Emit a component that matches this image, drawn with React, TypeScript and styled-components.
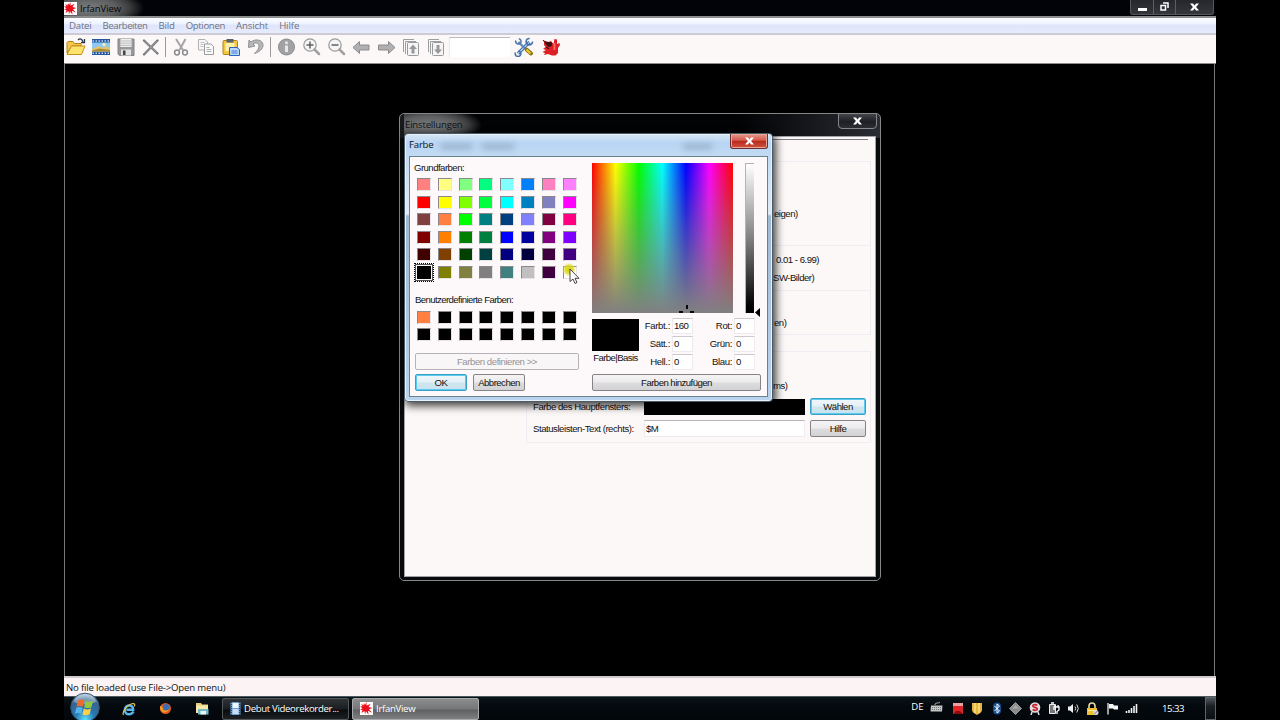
import React from 'react';
import styled, { createGlobalStyle, css } from 'styled-components';

const segoe = '"Open Sans", "Noto Sans", sans-serif';
const sansSerif = '"Liberation Sans", Arial, sans-serif';

const GlobalStyle = createGlobalStyle`
  * { box-sizing: border-box; }
  html, body { margin: 0; background: #000; overflow: hidden; }
  svg { display: block; flex: none; }
`;

const Screen = styled.div`
  width: 1280px;
  height: 720px;
  background: #000;
  display: flex;
  justify-content: center;
  overflow: hidden;
`;

const Desktop = styled.div`
  position: relative;
  width: 1152px;
  height: 720px;
  display: flex;
  flex-direction: column;
  font-family: ${segoe};
  color: #111;
`;

const Text = styled.span<{ $size?: number; $spacing?: number }>`
  font-size: ${p => p.$size ?? 9.6}px;
  letter-spacing: ${p => (p.$spacing === undefined ? 'inherit' : `${p.$spacing}px`)};
  line-height: 12px;
  white-space: nowrap;
`;

/* Main window */

const TitleBar = styled.header`
  height: 16px;
  display: flex;
  align-items: flex-start;
  background: radial-gradient(ellipse 56px 20px at 24px 8px, #7b7d7e 0%, #5c5e5f 50%, #3a3c3d 75%, transparent 100%), #020308;
`;

const TitleText = styled.div`
  flex: 1;
  display: flex;
  gap: 3px;
  color: #050505;
  padding-top: 2px;
  & > span { margin-top: 1px; }
`;

const CaptionButtons = styled.div`
  display: flex;
  height: 15px;
  margin-right: 2px;
  border: 1px solid #53565b;
  border-top: 0;
  border-radius: 0 0 3px 3px;
  background: linear-gradient(#25272c, #34363c);
`;

const CaptionButton = styled.div<{ $w: number }>`
  width: ${p => p.$w}px;
  display: flex;
  align-items: center;
  justify-content: center;
  padding-bottom: 1px;
  & + & { border-left: 1px solid #5b5e64; }
`;

const MenuBar = styled.nav`
  height: 17px;
  border-top: 2px solid #8b8d8c;
  display: flex;
  align-items: center;
  gap: 11px;
  padding: 0 0 0 5px;
  color: #6d7180;
  background: linear-gradient(#fafcff 0, #f0f4ff 35%, #dfe5fb 50%, #e6ebfd 100%);
`;

const Toolbar = styled.div`
  height: 31px;
  display: flex;
  align-items: center;
  border-top: 2px solid #cccbd6;
  border-bottom: 1px solid #8d8b8d;
  padding-bottom: 4px;
  background: #fcf8f8;
`;

const ToolSlot = styled.div<{ $w?: number }>`
  width: ${p => p.$w ?? 25}px;
  display: flex;
  justify-content: center;
`;

const ToolSeparator = styled.i`
  width: 1px;
  height: 20px;
  background: #9c9a9e;
  margin: 0 2px 0 2px;
`;

const ToolInput = styled.div`
  width: 61px;
  height: 20px;
  margin-left: 1px;
  border-top: 1px solid #bdbabd;
  border-left: 1px solid #ece8ea;
  background: #fff;
`;

const Canvas = styled.main`
  flex: 1;
  margin-right: 1px;
  border-left: 1px solid #777;
  border-right: 1px solid #777;
  background: #000;
`;

const StatusBar = styled.footer`
  height: 20px;
  display: flex;
  align-items: center;
  padding: 2px 0 0 2px;
  border-top: 2px solid #cfcacb;
  background: #fcf4f4;
  letter-spacing: -0.17px;
`;

/* Task bar */

const TaskBar = styled.div`
  height: 24px;
  display: flex;
  align-items: center;
  border-top: 1px solid #4b5960;
  background: linear-gradient(#0c1418, #04090e 40%, #03070c);
  color: #fff;
`;

const StartOrb = styled.div`
  width: 42px;
  height: 30px;
  margin-top: -4px;
  padding-left: 6px;
  z-index: 1;
`;

const LaunchItem = styled.div`
  width: 36.5px;
  display: flex;
  justify-content: center;
  padding-left: 9px;
`;

const TaskButtons = styled.div`
  display: flex;
  gap: 3px;
  margin-left: 6.5px;
`;

const TaskButton = styled.div<{ $active?: boolean }>`
  width: 127px;
  height: 22px;
  padding-left: 7px;
  display: flex;
  align-items: center;
  gap: 3px;
  border: 1px solid ${p => (p.$active ? '#a8a9aa' : '#55585b')};
  border-radius: 2px;
  background: ${p =>
    p.$active
      ? 'linear-gradient(#8b8c8d, #767778 50%, #5f6061 55%, #7f8081)'
      : 'linear-gradient(#303437, #191d20 50%, #0a0d10 55%, #1d2022)'};
`;

const Tray = styled.div`
  margin-left: auto;
  height: 23px;
  display: flex;
  align-items: center;
`;

const TrayItem = styled.div<{ $w?: number; $raise?: number }>`
  width: ${p => p.$w ?? 19.25}px;
  padding-bottom: ${p => p.$raise ?? 0}px;
  display: flex;
  justify-content: center;
`;

const ShowDesktop = styled.div`
  width: 11px;
  height: 23px;
  border: 1px solid #5e6468;
  background: linear-gradient(#50565b, #1a1e22 40%, #0c0f12);
`;

/* Dialog windows floating on the desktop */

const SettingsWindow = styled.section`
  position: absolute;
  left: 335px;
  top: 113px;
  width: 482px;
  height: 468px;
  padding: 0 4px 3px;
  border: 1px solid #858787;
  border-radius: 5px;
  background: linear-gradient(90deg, #191a1b 0, #020305 50px, #020305 340px, #2a2c33 100%);
  background-size: 100% 24px;
  background-repeat: no-repeat;
  background-color: #08090a;
  display: flex;
  flex-direction: column;
`;

const SettingsTitle = styled.div`
  height: 22px;
  display: flex;
  justify-content: space-between;
  background: radial-gradient(ellipse 54px 18px at 24px 11px, #77797a 0%, #5c5e5f 50%, #3a3c3d 75%, transparent 100%);
  padding: 5px 0 0 1px;
  letter-spacing: -0.2px;
`;

const SettingsClose = styled.div`
  width: 39px;
  height: 16px;
  margin: -6px -1px 0 0;
  border: 1px solid #85878a;
  border-radius: 0 0 4px 4px;
  display: flex;
  align-items: center;
  justify-content: center;
  background: linear-gradient(#43454b, #1d1f24 55%, #2c2e34);
`;

const SettingsBody = styled.div`
  flex: 1;
  border: 1px solid #a0a1a4;
  background: #fdf8f8;
  display: flex;
  flex-direction: column;
  font-family: ${sansSerif};
  letter-spacing: -0.5px;
`;

const TabEdge = styled.div`
  height: 1px;
  margin: 2px 7px 21px 360px;
  background: #817b84;
`;

const Group = styled.div<{ $h: number; $gap?: number }>`
  height: ${p => p.$h}px;
  margin: 0 4px ${p => p.$gap ?? 0}px 121px;
  border: 1px solid #efecf3;
  border-bottom-width: ${p => (p.$gap === undefined ? 0 : 1)}px;
  display: flex;
  flex-direction: column;
`;

const GroupLine = styled.div<{ $top: number; $left: number }>`
  height: 12px;
  margin-top: ${p => p.$top}px;
  padding-left: ${p => p.$left}px;
  display: flex;
`;

const FieldRow = styled.div<{ $top: number }>`
  height: 17px;
  margin: ${p => p.$top}px 0 0 6px;
  display: grid;
  grid-template-columns: 111px 161px 56px;
  align-items: center;
  & > :nth-child(3) { margin-left: 5px; }
`;

const ColorPreview = styled.div`
  height: 16px;
  background: #000;
`;

const TextField = styled.div`
  height: 17px;
  padding: 0 0 0 1px;
  border: 1px solid #efebef;
  border-top-color: #b9b5b9;
  background: #fff;
  display: flex;
  align-items: center;
`;

const PushButton = styled.div<{ $w: number; $primary?: boolean; $disabled?: boolean }>`
  width: ${p => p.$w}px;
  height: 17px;
  display: flex;
  align-items: center;
  justify-content: center;
  border: 1px solid #858387;
  border-radius: 2px;
  background: linear-gradient(#f5f3f4, #ecebec 48%, #dddcde 52%, #d2d1d3);
  ${p => p.$primary && css`
    border-color: #3d9fc4;
    box-shadow: inset 0 0 0 1px #58cbf0;
    background: linear-gradient(#f0f7fa, #e4f1f6 48%, #cfe6f0 52%, #c8e2ee);
  `}
  ${p => p.$disabled && css`
    border-color: #b6b3b6;
    background: #f8f6f7;
    color: #969396;
  `}
`;

const ColorWindow = styled.section`
  position: absolute;
  left: 340px;
  top: 133px;
  width: 369px;
  height: 269px;
  padding: 0 4px 4px;
  border: 1px solid #4c5a66;
  border-radius: 4px;
  background: linear-gradient(#d8e7f5 0, #b8d5f3 9px, #c3dbf4 23px, #d5e5f5 60px, #dfebf5 80px, #9fb9d2 82px, #bad4ee 100%);
  box-shadow: inset 0 0 0 1px #e6f1fa, 2px 3px 9px 1px rgba(0, 0, 0, 0.75);
  display: flex;
  flex-direction: column;
`;

const ColorTitle = styled.div`
  position: relative;
  height: 22px;
  flex: none;
  display: flex;
  justify-content: space-between;
  padding: 5px 0 0 0;
  letter-spacing: -0.2px;
`;

const GlassGhost = styled.i<{ $x: number; $w: number }>`
  position: absolute;
  left: ${p => p.$x}px;
  top: 10px;
  width: ${p => p.$w}px;
  height: 5px;
  background: #93abc8;
  filter: blur(3px);
`;

const RedClose = styled.div`
  width: 38px;
  height: 15px;
  margin-top: -5px;
  border: 1px solid #672f32;
  border-top: 0;
  border-radius: 0 0 3px 3px;
  box-shadow: inset 0 0 0 1px #e8a59a;
  background: linear-gradient(#e79b8f, #d6594b 45%, #b92c1d 52%, #d0533e);
  display: flex;
  align-items: center;
  justify-content: center;
`;

const ColorBody = styled.div`
  flex: 1;
  border: 1px solid #69808f;
  background: #fdf9fa;
  display: flex;
  font-family: ${sansSerif};
  letter-spacing: -0.54px;
`;

const PaletteColumn = styled.div`
  width: 182px;
  padding: 5px 0 0 4px;
  display: flex;
  flex-direction: column;
`;

const SwatchGrid = styled.div<{ $top: number }>`
  margin: ${p => p.$top}px 0 0 3px;
  display: grid;
  grid-template-columns: repeat(8, 14px);
  grid-auto-rows: 13px;
  column-gap: 6.8px;
  row-gap: 4.5px;
`;

const Swatch = styled.div<{ $color: string; $selected?: boolean }>`
  background: ${p => p.$color};
  border: 1px solid;
  border-color: #8b888c #e8e4e6 #e8e4e6 #8b888c;
  ${p => p.$selected && css`
    border-color: #000;
    box-shadow: 0 0 0 1px #fdf9fa, 0 0 0 2px #555;
    outline: 1px dotted #000;
    outline-offset: 2px;
  `}
`;

const ButtonRow = styled.div<{ $top: number }>`
  display: flex;
  gap: 6px;
  margin: ${p => p.$top}px 0 0 1px;
`;

const MixerColumn = styled.div`
  flex: 1;
  padding-top: 6px;
  display: flex;
  flex-direction: column;
`;

const PickerRow = styled.div`
  height: 150px;
  display: flex;
`;

const Spectrum = styled.div`
  width: 141px;
  height: 150px;
  display: flex;
  justify-content: flex-end;
  align-items: flex-end;
  padding-right: 39px;
  background: linear-gradient(rgba(128, 128, 128, 0), #808080),
    linear-gradient(90deg, #f00, #ff0 16.67%, #0f0 33.33%, #0ff 50%, #00f 66.67%, #f0f 83.33%, #f00);
`;

const LuminanceBar = styled.div`
  width: 9px;
  height: 150px;
  margin-left: 12px;
  border: 1px solid #b5b2b5;
  border-bottom: 0;
  border-right: 0;
  background: linear-gradient(#fff, #808080 50%, #000 96%);
`;

const LuminanceArrow = styled.div`
  align-self: flex-end;
  margin: 0 0 -4px 1px;
`;

const ValuesRow = styled.div`
  display: flex;
  margin-top: 6px;
  height: 55px;
`;

const PreviewBox = styled.div`
  width: 47px;
  display: flex;
  flex-direction: column;
  align-items: center;
  gap: 2px;
`;

const PreviewColor = styled.div`
  width: 47px;
  height: 32px;
  margin-bottom: -1px;
  background: #000;
`;

const ValueGrid = styled.div`
  display: grid;
  grid-template-columns: 31px 21px 37px 21px;
  grid-auto-rows: 16px;
  column-gap: 2px;
  row-gap: 2px;
  margin-top: -1px;
`;

const ValueLabel = styled.div`
  display: flex;
  align-items: center;
  justify-content: flex-end;
  letter-spacing: -0.35px;
`;

const ValueInput = styled.div`
  border: 1px solid #eeeaee;
  border-top-color: #cdc9cd;
  background: #fff;
  padding-left: 1px;
  display: flex;
  align-items: center;
`;

const Pointer = styled.div`
  position: absolute;
  left: 498px;
  top: 262px;
`;

const basicColors = [
  '#ff8080', '#ffff80', '#80ff80', '#00ff80', '#80ffff', '#0080ff', '#ff80c0', '#ff80ff',
  '#ff0000', '#ffff00', '#80ff00', '#00ff40', '#00ffff', '#0080c0', '#8080c0', '#ff00ff',
  '#804040', '#ff8040', '#00ff00', '#008080', '#004080', '#8080ff', '#800040', '#ff0080',
  '#800000', '#ff8000', '#008000', '#008040', '#0000ff', '#0000a0', '#800080', '#8000ff',
  '#400000', '#804000', '#004000', '#004040', '#000080', '#000040', '#400040', '#400080',
  '#000000', '#808000', '#808040', '#808080', '#408080', '#c0c0c0', '#400040', '#ffffff',
];
const customColors = ['#ff8040', ...Array(15).fill('#000000')];

const menuItems: [string, number][] = [
  ['Datei', -0.2], ['Bearbeiten', -0.42], ['Bild', -0.2], ['Optionen', -0.35], ['Ansicht', -0.1], ['Hilfe', -0.1],
];

/* Icons */

const Icon = ({ w = 20, h = 20, children }: { w?: number; h?: number; children: React.ReactNode }) => (
  <svg width={w} height={h} viewBox={`0 0 ${w} ${h}`} fill="none">{children}</svg>
);

const CatIcon = () => (
  <Icon w={13} h={13}>
    <rect width="13" height="13" fill="#fff" />
    <path d="M1 1.500l2.500 2L4 1l1 2 1.500-3v3.500l4-1.500-2 3L12.500 6 9 7.200l3 3.600-4-2 .5 4-2.500-3.500L5 12.500 4.500 9 1.500 11l1-3L0 7.500l2.500-1.300L0 4.500l2.500-.3z" fill="#e8101c" />
  </Icon>
);

const CloseGlyph = () => (
  <Icon w={9} h={8}>
    <path d="M0 .5h3L4.500 2.400 6 .5h3L6.100 4 9 7.500H6L4.500 5.600 3 7.500H0L2.900 4z" fill="#fff" />
  </Icon>
);

const OpenIcon = () => (
  <Icon>
    <path d="M1 16V5.500l1-1h5l1.500 2H15V9H6z" fill="#f3c54d" stroke="#b68416" />
    <path d="M1 17.500L5.500 9H19l-3.500 8.500z" fill="#ffe36d" stroke="#c2911d" />
    <path d="M12 3c2-2 4-1 5 1.500M18.500 2v3.500H15" stroke="#27384a" strokeWidth="1.300" />
  </Icon>
);
const FilmIcon = () => (
  <Icon>
    <rect x="1" y="2" width="18" height="16" fill="#25569c" />
    <path d="M1.500 4h17M1.500 16.200h17" stroke="#b9d6f4" strokeWidth="1.400" strokeDasharray="1.500 1.500" />
    <rect x="1" y="5.500" width="18" height="9" fill="#8ec9f5" />
    <path d="M1 12l6.500-3 4 2 3-2 4.500 2v3.500H1z" fill="#e2c469" />
    <path d="M1 13.500l7.500-2 10.500 1.500v1.500H1z" fill="#ab8938" />
    <circle cx="13" cy="7.500" r="1.500" fill="#fff3b1" />
  </Icon>
);
const SaveIcon = () => (
  <Icon>
    <path d="M2 2h16v16.500H3.500L2 17z" fill="#98989a" stroke="#838385" />
    <rect x="4.500" y="2" width="11" height="8" fill="#f1f0f0" />
    <path d="M5 4h10M5 6.200h10M5 8.400h10" stroke="#bbb" />
    <rect x="5" y="12.500" width="10" height="6" fill="#e2e2e2" />
    <rect x="7" y="13.500" width="2.500" height="4.500" fill="#444" />
  </Icon>
);
const DeleteIcon = () => (
  <Icon>
    <path d="M3 3.500l13.500 13M16.500 3.500L3 17.500" stroke="#77777a" strokeWidth="2.400" strokeLinecap="round" />
    <path d="M3.500 4l12.500 12M16 4L3.500 17" stroke="#a8a8aa" strokeWidth=".8" />
  </Icon>
);
const CutIcon = () => (
  <Icon>
    <path d="M5 2l7 11M14.500 2L8.500 13" stroke="#a5a5a8" strokeWidth="2" />
    <circle cx="6" cy="15.500" r="2.400" stroke="#8b8b8e" strokeWidth="1.500" />
    <circle cx="14" cy="15.500" r="2.400" stroke="#8b8b8e" strokeWidth="1.500" />
  </Icon>
);
const CopyIcon = () => (
  <Icon>
    <path d="M2.500 2.500H9l2.500 2.500v8h-9z" fill="#f7f7f7" stroke="#b1b0b3" />
    <path d="M4.500 5.500h4M4.500 7.500h3M4.500 9.500h3" stroke="#c0bfc2" />
    <path d="M8.500 7H15l2.500 2.500v8h-9z" fill="#fafafa" stroke="#9b9b9e" />
    <path d="M10.500 10.500h3M10.500 12.500h5M10.500 14.500h5" stroke="#b0afb2" />
  </Icon>
);
const PasteIcon = () => (
  <Icon>
    <rect x="2" y="3.500" width="14.500" height="14" rx="1" fill="#f4c940" stroke="#b28419" />
    <path d="M5.500 2h7v3.500h-7z" fill="#59616d" />
    <rect x="4.500" y="6" width="9" height="8" fill="#fff0ac" />
    <path d="M8.500 10.500H16l2.500 2v6h-10z" fill="#b9d5f9" stroke="#2c64b8" />
    <path d="M10.500 14h6M10.500 16h6" stroke="#477fce" />
  </Icon>
);
const UndoIcon = () => (
  <Icon>
    <path d="M3 3l-.5 7.500L9 9 7 7c3-2 6-1 6 2 0 2.500-1.500 4.500-4.500 7.500C13 15 17.500 12 17 7.500 16.500 2.500 9 1.500 5 5z" fill="#b7b7ba" stroke="#919195" />
  </Icon>
);
const InfoIcon = () => (
  <Icon>
    <circle cx="10.500" cy="10" r="8" fill="#a2a2a4" stroke="#8b8b8e" />
    <circle cx="10.500" cy="5.700" r="1.500" fill="#e8e8e8" />
    <path d="M9 8.500h3v6.500H9z" fill="#e8e8e8" />
  </Icon>
);
const ZoomIcon = ({ plus }: { plus?: boolean }) => (
  <Icon>
    <circle cx="9" cy="8" r="6.200" fill="#f6f5f6" stroke="#99999c" strokeWidth="1.200" />
    <path d={plus ? 'M5.500 8h7M9 4.500v7' : 'M5.500 8h7'} stroke="#606064" strokeWidth="1.500" />
    <path d="M13.500 12.500l4.500 4.500" stroke="#a1a1a4" strokeWidth="2.500" strokeLinecap="round" />
  </Icon>
);
const ArrowIcon = ({ right }: { right?: boolean }) => (
  <Icon>
    <path d={right ? 'M19 10.500L12.500 4.500v3.500h-10v5h10v3.500z' : 'M2 10.500L8.500 4.500v3.500h9.500v5H8.500v3.500z'} fill="#b0b0b2" stroke="#8b8b8e" />
  </Icon>
);
const PageIcon = ({ down }: { down?: boolean }) => (
  <Icon>
    <path d="M2.500 15V2.500H13M4.500 17V4.500H15" stroke="#9d9da0" />
    <rect x="6.500" y="5.500" width="11" height="13" rx="1" fill="#f6f5f6" stroke="#99999c" />
    <path d={down ? 'M12 17l-4-4.500h2.500V8h3v4.500H16z' : 'M12 7.500L8 12h2.500v4.500h3V12H16z'} fill="#98989b" />
  </Icon>
);
const ToolsIcon = () => (
  <Icon>
    <path d="M4 16.500L15.500 5" stroke="#3f69a6" strokeWidth="3.200" />
    <path d="M4 16.500L15.500 5" stroke="#a8cdf3" strokeWidth="1.400" />
    <path d="M18.500 4.500a3.200 3.200 0 11-2.800-3M1.500 15.500a2.800 2.800 0 103-1.500" stroke="#4773ad" strokeWidth="1.600" />
    <path d="M4.500 5l6 6" stroke="#5b86bb" strokeWidth="2.200" />
    <path d="M1.800 3.500a2.700 2.700 0 103-1.800" stroke="#4c78af" strokeWidth="1.600" />
    <path d="M12.500 12.500l4.500 4" stroke="#8e7210" strokeWidth="4" strokeLinecap="round" />
    <path d="M12.500 12.500l4 4" stroke="#e9cb38" strokeWidth="2" />
  </Icon>
);
const RedCatIcon = () => (
  <Icon>
    <path d="M3 3.500l4 1.500 3-1 2.500 3 1-5 2.500.5v4.500l2.500-1 .5 2-2 3v5l-2.500 2.500H11L7 17l-4 1 1-2-2.500-1L5 13l-3-1 2.500-2L3 8z" fill="#dd2024" />
    <path d="M4 5l7 1-1 3-3 .5zM2 3l2 2.500M5 10.500l3 1" fill="#3a1214" stroke="#3a1214" />
    <path d="M13.500 6v7" stroke="#ff6c65" strokeWidth="1.800" />
  </Icon>
);

const Orb = () => (
  <svg width="30" height="30" viewBox="0 0 30 30">
    <defs>
      <radialGradient id="orb" cx="50%" cy="92%" r="88%">
        <stop offset="0" stopColor="#5fe0ff" />
        <stop offset=".4" stopColor="#2678b4" />
        <stop offset=".8" stopColor="#39628b" />
        <stop offset="1" stopColor="#a9bfd1" />
      </radialGradient>
    </defs>
    <circle cx="15" cy="15.500" r="14.300" fill="url(#orb)" stroke="#315470" />
    <path d="M4 10C6 4 11 2 15 2s9 2 11 8c-7 3-15 3-22 0z" fill="#d8eaf5" opacity=".42" />
    <path d="M8 8.500c2.300-1.500 4.500-1.300 6.500 0L13 14.800c-2-1.200-4.200-1.200-6.500 0z" fill="#ef6b2d" />
    <path d="M15.500 9c2.500 1.200 4.700 1 7.500 0l-1.700 6.200c-2.400 1.200-4.700 1.200-7 0z" fill="#94c83d" />
    <path d="M6.200 16c2.300-1.200 4.500-1.200 6.500 0l-1.400 6c-2.200-1.200-4.500-1.200-6.500 0z" fill="#55b3ee" />
    <path d="M13.800 16.500c2.500 1.200 4.700 1.200 7.200 0l-1.400 5.700c-2.500 1.400-4.800 1.400-7.200.2z" fill="#fbd04a" />
  </svg>
);
const IeIcon = () => (
  <Icon w={14} h={14}>
    <path d="M11.500 9.500c-1 2-2.500 2.800-4.500 2.800C4.500 12.300 2.800 10.500 2.800 8S4.500 3.500 7 3.500c2.700 0 4.200 1.800 4.200 4.300H4.500" stroke="#58b6ee" strokeWidth="2.400" />
    <path d="M1.500 13C-.5 10 6 2 11 1.500c2 0 2 1.500 1.200 3" stroke="#e9c64c" strokeWidth="1.200" />
  </Icon>
);
const FirefoxIcon = () => (
  <Icon w={13} h={13}>
    <circle cx="6.500" cy="6.500" r="5.500" fill="#e2571e" />
    <circle cx="7" cy="5.300" r="3.300" fill="#3c6eb4" />
    <path d="M1 4c2 0 3 1 3 3 1 2 4 2 6 0-1 4-7 5-9 0z" fill="#f39a27" />
  </Icon>
);
const ExplorerIcon = () => (
  <Icon w={14} h={13}>
    <path d="M1 1h5l1 1.500h6V11H1z" fill="#e8cf7e" />
    <path d="M1 3.500h12V11H1z" fill="#f8e9a8" />
    <path d="M3 7h10.500v5.500H3z" fill="#74b8c8" />
    <path d="M5.500 9H11v3.500H5.500z" fill="#e9f4ee" />
  </Icon>
);
const VideoIcon = () => (
  <Icon w={11} h={13}>
    <rect x=".5" width="10" height="13" fill="#6d9dd2" />
    <rect x="2.500" y="1" width="6" height="5" fill="#f0f7ff" />
    <rect x="2.500" y="7" width="6" height="5" fill="#c9def3" />
    <path d="M1.300 0v13M9.700 0v13" stroke="#16304d" strokeDasharray="1 1" />
  </Icon>
);

const KeyboardIcon = () => (
  <Icon w={13} h={12}>
    <path d="M5 4c0-3 3-1 5-3" stroke="#bbb" />
    <path d="M1 4.500h11.500L12 10.500H.500z" fill="#c3c5c5" />
    <path d="M2 6.500h9M2 8.500h9" stroke="#777" strokeDasharray="1 1" />
  </Icon>
);
const trayIcons: React.ReactNode[] = [
  <Icon w={12} h={13}><rect x="1" y="1" width="10" height="11" fill="#d7292c" /><path d="M1 1h10v3H1z" fill="#e9a2a0" /><path d="M4 5h4v3H4z" fill="#f31d21" /><path d="M1 12l3-3h4l3 3z" fill="#8c0d10" /></Icon>,
  <Icon w={12} h={13}><path d="M1 1h10v7c0 2-3 4-5 5-2-1-5-3-5-5z" fill="#e7b63e" /><path d="M4 1v10M8 1v10" stroke="#fff0a8" /></Icon>,
  <Icon w={12} h={13}><rect x="2" y=".5" width="8" height="12" rx="4" fill="#164f94" /><path d="M3.500 4l5 5L6 11V2l2.500 2-5 5" stroke="#fff" /></Icon>,
  <Icon w={13} h={13}><path d="M6.500.500l6 6-6 6-6-6z" fill="#8b8b8b" stroke="#bdbdbd" strokeWidth=".7" /><path d="M6.500 3L10 6.500H3z" fill="#aaa" /></Icon>,
  <Icon w={12} h={13}><circle cx="6" cy="5.500" r="5.300" fill="#e6dfdf" /><path d="M8.300 3.500c-1.500-1.500-4.500-1-4.500.500 0 1.800 4.500 1 4.500 3 0 1.500-3 1.800-4.600.3" stroke="#c7202d" strokeWidth="1.700" /><path d="M3 10l-1 3M9 10l1 3" stroke="#ddd" strokeWidth="1.500" /></Icon>,
  <Icon w={12} h={13}><path d="M1.500 2.500h6v9h-6z" fill="#777" stroke="#eee" /><path d="M3 1h3M6 8V5h5v3L9 9.500V12M7 3v2M10 3v2" stroke="#fff" strokeWidth="1.300" /></Icon>,
  <Icon w={13} h={13}><path d="M1 4.500h2L6 2v9L3 8.500H1z" fill="#f0f0f0" /><path d="M8 4.500q1.500 2 0 4M9.800 2.500q3 4 0 8" stroke="#ddd" /></Icon>,
  <Icon w={13} h={14}><path d="M3 7V4c0-4 6-4 6 0v3" stroke="#e8d9a4" strokeWidth="1.600" /><path d="M1 6h10v7H1z" fill="#eec02f" /><path d="M2 8.500h7" stroke="#fff0a4" /><circle cx="10" cy="10.500" r="2.500" fill="#dcdcdc" /><path d="M8.500 12l3-3" stroke="#666" /></Icon>,
  <Icon w={13} h={13}><path d="M2 1v11.500" stroke="#eee" strokeWidth="1.300" /><path d="M3 2h4l1 1.500h4v4H8L7 6.500H3z" fill="#f5f5f5" /></Icon>,
  <Icon w={13} h={13}><path d="M1.500 9v2M4 8v3M6.500 6v5M9 4v7M11.500 2v9" stroke="#f1f1f1" strokeWidth="1.600" /></Icon>,
];

const Grid = ({ colors, selected, top }: { colors: string[]; selected?: number; top: number }) => (
  <SwatchGrid $top={top}>
    {colors.map((c, i) => <Swatch key={i} $color={c} $selected={i === selected} />)}
  </SwatchGrid>
);

const values: [string, string][] = [
  ['Farbt.:', '160'], ['Rot:', '0'], ['Sätt.:', '0'], ['Grün:', '0'], ['Hell.:', '0'], ['Blau:', '0'],
];

const Settings = () => (
  <SettingsWindow>
    <SettingsTitle>
      <Text>Einstellungen</Text>
      <SettingsClose><CloseGlyph /></SettingsClose>
    </SettingsTitle>
    <SettingsBody>
      <TabEdge />
      <Group $h={84}><GroupLine $top={46} $left={247}><Text>eigen)</Text></GroupLine></Group>
      <Group $h={45}>
        <GroupLine $top={8} $left={249}><Text>0.01 - 6.99)</Text></GroupLine>
        <GroupLine $top={6} $left={246}><Text>SW-Bilder)</Text></GroupLine>
      </Group>
      <Group $h={45} $gap={16}><GroupLine $top={26} $left={247}><Text>en)</Text></GroupLine></Group>
      <Group $h={92} $gap={0}>
        <GroupLine $top={28} $left={246}><Text>ms)</Text></GroupLine>
        <FieldRow $top={6}>
          <Text $spacing={-0.46}>Farbe des Hauptfensters:</Text>
          <ColorPreview />
          <PushButton $w={56} $primary><Text>Wählen</Text></PushButton>
        </FieldRow>
        <FieldRow $top={5}>
          <Text $spacing={-0.46}>Statusleisten-Text (rechts):</Text>
          <TextField><Text>$M</Text></TextField>
          <PushButton $w={56}><Text>Hilfe</Text></PushButton>
        </FieldRow>
      </Group>
    </SettingsBody>
  </SettingsWindow>
);

const ColorDialog = () => (
  <ColorWindow>
    <ColorTitle>
      <Text>Farbe</Text>
      <GlassGhost $x={32} $w={31} />
      <GlassGhost $x={73} $w={32} />
      <GlassGhost $x={274} $w={29} />
      <RedClose><CloseGlyph /></RedClose>
    </ColorTitle>
    <ColorBody>
      <PaletteColumn>
        <Text>Grundfarben:</Text>
        <Grid colors={basicColors} selected={40} top={4} />
        <ButtonRow $top={15}><Text $spacing={-0.6}>Benutzerdefinierte Farben:</Text></ButtonRow>
        <Grid colors={customColors} top={5} />
        <ButtonRow $top={12}><PushButton $w={164} $disabled><Text $spacing={-0.45}>Farben definieren &gt;&gt;</Text></PushButton></ButtonRow>
        <ButtonRow $top={4}>
          <PushButton $w={52} $primary><Text>OK</Text></PushButton>
          <PushButton $w={52}><Text>Abbrechen</Text></PushButton>
        </ButtonRow>
      </PaletteColumn>
      <MixerColumn>
        <PickerRow>
          <Spectrum>
            <Icon w={15} h={9}>
              <path d="M7 1h2v4H7zM0 7h4v2H0zM11 7h4v2h-4z" fill="#080808" />
            </Icon>
          </Spectrum>
          <LuminanceBar />
          <LuminanceArrow><Icon w={6} h={9}><path d="M0 4.500L5 0v9z" fill="#000" /></Icon></LuminanceArrow>
        </PickerRow>
        <ValuesRow>
          <PreviewBox><PreviewColor /><Text $spacing={-0.6}>Farbe|Basis</Text></PreviewBox>
          <ValueGrid>
            {values.map(([label, value]) => (
              <React.Fragment key={label}>
                <ValueLabel><Text>{label}</Text></ValueLabel>
                <ValueInput><Text>{value}</Text></ValueInput>
              </React.Fragment>
            ))}
          </ValueGrid>
        </ValuesRow>
        <PushButton $w={169}><Text>Farben hinzufügen</Text></PushButton>
      </MixerColumn>
    </ColorBody>
  </ColorWindow>
);

export default function App() {
  return (
    <Screen>
      <GlobalStyle />
      <Desktop>
        <TitleBar>
          <TitleText><CatIcon /><Text $spacing={-0.1}>IrfanView</Text></TitleText>
          <CaptionButtons>
            <CaptionButton $w={22}><Icon w={9} h={8}><path d="M0 5h9v3H0z" fill="#fff" /></Icon></CaptionButton>
            <CaptionButton $w={22}>
              <Icon w={9} h={9}><path d="M3 1h5v5M1 3.500h4.500v4.500H1z" stroke="#fff" strokeWidth="1.500" /></Icon>
            </CaptionButton>
            <CaptionButton $w={38}><CloseGlyph /></CaptionButton>
          </CaptionButtons>
        </TitleBar>
        <MenuBar>
          {menuItems.map(([m, s]) => <Text key={m} $spacing={s}>{m}</Text>)}
        </MenuBar>
        <Toolbar>
          <ToolSlot $w={24}><OpenIcon /></ToolSlot>
          <ToolSlot><FilmIcon /></ToolSlot>
          <ToolSlot><SaveIcon /></ToolSlot>
          <ToolSlot><DeleteIcon /></ToolSlot>
          <ToolSeparator />
          <ToolSlot><CutIcon /></ToolSlot>
          <ToolSlot><CopyIcon /></ToolSlot>
          <ToolSlot><PasteIcon /></ToolSlot>
          <ToolSlot><UndoIcon /></ToolSlot>
          <ToolSeparator />
          <ToolSlot><InfoIcon /></ToolSlot>
          <ToolSlot><ZoomIcon plus /></ToolSlot>
          <ToolSlot><ZoomIcon /></ToolSlot>
          <ToolSlot><ArrowIcon /></ToolSlot>
          <ToolSlot><ArrowIcon right /></ToolSlot>
          <ToolSlot><PageIcon /></ToolSlot>
          <ToolSlot><PageIcon down /></ToolSlot>
          <ToolInput />
          <ToolSlot $w={28}><ToolsIcon /></ToolSlot>
          <ToolSlot><RedCatIcon /></ToolSlot>
        </Toolbar>
        <Canvas />
        <StatusBar><Text>{'No file loaded (use File->Open menu)'}</Text></StatusBar>
        <TaskBar>
          <StartOrb><Orb /></StartOrb>
          <LaunchItem><IeIcon /></LaunchItem>
          <LaunchItem><FirefoxIcon /></LaunchItem>
          <LaunchItem><ExplorerIcon /></LaunchItem>
          <TaskButtons>
            <TaskButton><VideoIcon /><Text $spacing={-0.33}>Debut Videorekorder...</Text></TaskButton>
            <TaskButton $active><CatIcon /><Text $spacing={-0.3}>IrfanView</Text></TaskButton>
          </TaskButtons>
          <Tray>
            <TrayItem $w={14} $raise={3}><Text>DE</Text></TrayItem>
            <TrayItem $w={24} $raise={3}><KeyboardIcon /></TrayItem>
            {trayIcons.map((icon, i) => <TrayItem key={i}>{icon}</TrayItem>)}
            <TrayItem $w={64}><Text $spacing={-0.45}>15:33</Text></TrayItem>
            <ShowDesktop />
          </Tray>
        </TaskBar>
        <Settings />
        <ColorDialog />
        <Pointer>
          <svg width="20" height="26" viewBox="0 0 20 26">
            <defs>
              <radialGradient id="glow">
                <stop offset="0" stopColor="#d5d000" />
                <stop offset=".6" stopColor="#ddd820" stopOpacity=".85" />
                <stop offset="1" stopColor="#eeea60" stopOpacity="0" />
              </radialGradient>
            </defs>
            <circle cx="7" cy="7.500" r="7" fill="url(#glow)" />
            <path d="M8 7v12.500l3-2.500 2 4.500 2-1-2-4.200h4z" fill="#fff" stroke="#333" strokeWidth=".9" />
          </svg>
        </Pointer>
      </Desktop>
    </Screen>
  );
}
